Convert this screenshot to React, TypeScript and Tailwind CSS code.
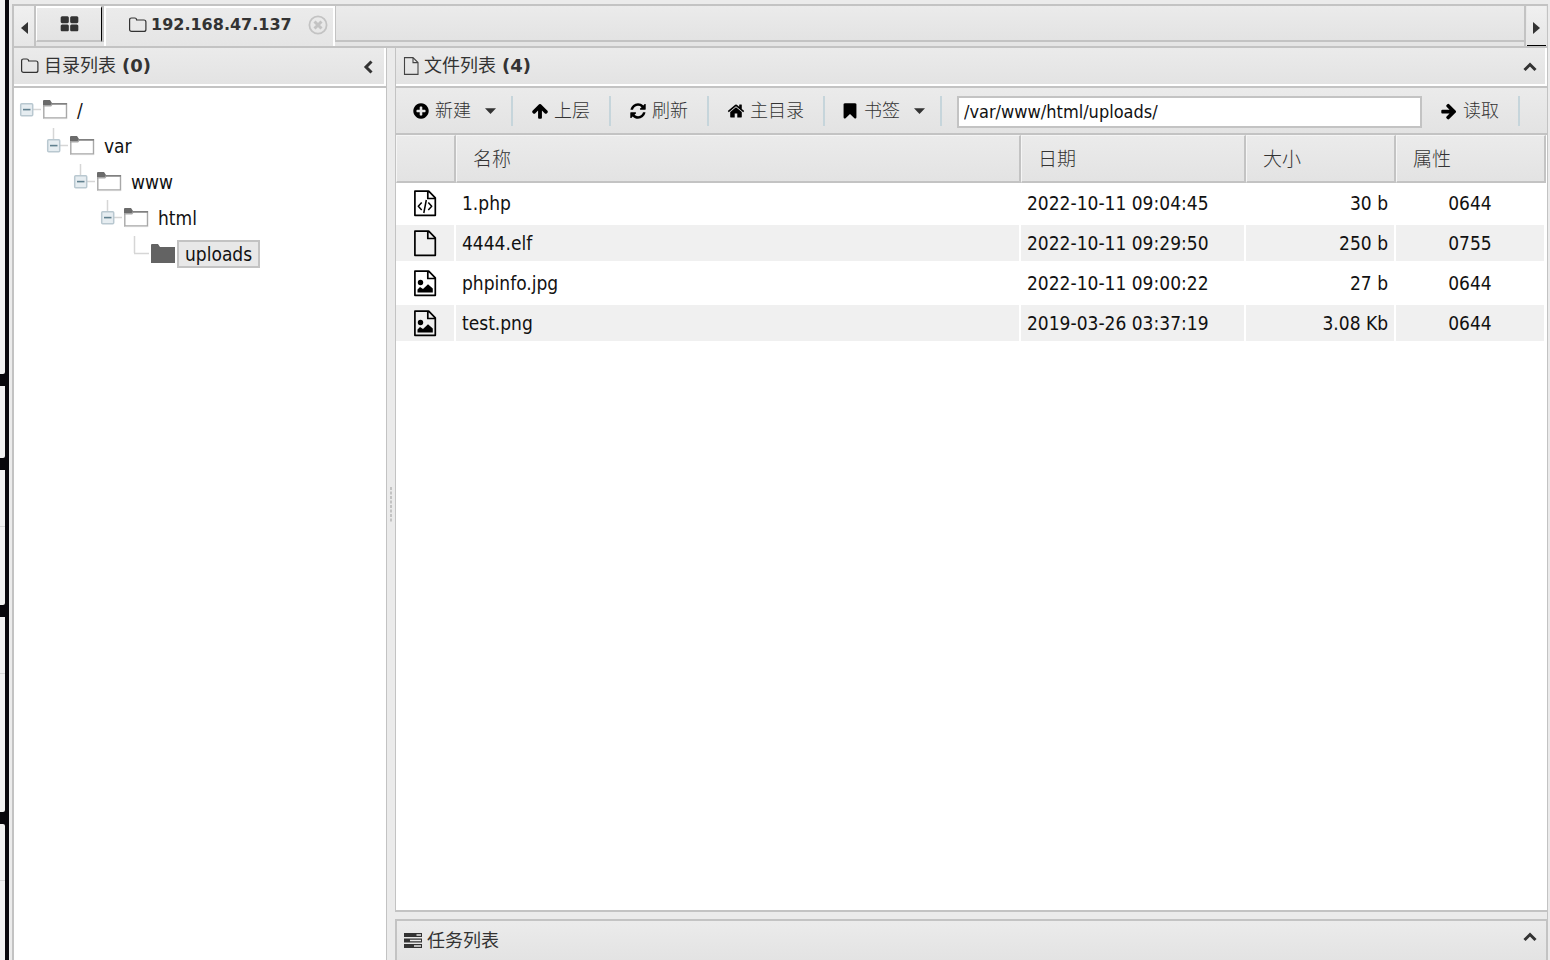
import React from "react";

const glyphs = {
  grid: "M832 1024v384q0 52-38 90t-90 38h-512q-52 0-90-38t-38-90v-384q0-52 38-90t90-38h512q52 0 90 38t38 90zm0-768v384q0 52-38 90t-90 38h-512q-52 0-90-38t-38-90v-384q0-52 38-90t90-38h512q52 0 90 38t38 90zm896 768v384q0 52-38 90t-90 38h-512q-52 0-90-38t-38-90v-384q0-52 38-90t90-38h512q52 0 90 38t38 90zm0-768v384q0 52-38 90t-90 38h-512q-52 0-90-38t-38-90v-384q0-52 38-90t90-38h512q52 0 90 38t38 90z",
  plus: "M1344 960v-128q0-26-19-45t-45-19h-256v-256q0-26-19-45t-45-19h-128q-26 0-45 19t-19 45v256h-256q-26 0-45 19t-19 45v128q0 26 19 45t45 19h256v256q0 26 19 45t45 19h128q26 0 45-19t19-45v-256h256q26 0 45-19t19-45zm320-64q0 209-103 385.5t-279.5 279.5-385.5 103-385.5-103-279.5-279.5-103-385.5 103-385.5 279.5-279.5 385.5-103 385.5 103 279.5 279.5 103 385.5z",
  up: "M1675 971q0 51-37 90l-75 75q-38 38-91 38-54 0-90-38l-294-293v704q0 52-37.5 84.5t-90.5 32.5h-128q-53 0-90.5-32.5t-37.5-84.5v-704l-294 293q-36 38-90 38t-90-38l-75-75q-38-38-38-90 0-53 38-91l651-651q35-37 90-37 54 0 91 37l651 651q37 39 37 91z",
  right: "M1600 960q0 54-37 91l-651 651q-39 37-91 37-51 0-90-37l-75-75q-38-38-38-91t38-91l293-293h-704q-52 0-84.5-37.5t-32.5-90.5v-128q0-53 32.5-90.5t84.5-37.5h704l-293-294q-38-36-38-90t38-90l75-75q38-38 90-38 53 0 91 38l651 651q37 35 37 90z",
  refresh: "M1639 1056q0 5-1 7-64 268-268 434.5t-478 166.5q-146 0-282.5-55t-243.5-157l-129 129q-19 19-45 19t-45-19-19-45v-448q0-26 19-45t45-19h448q26 0 45 19t19 45-19 45l-137 137q71 66 161 102t187 36q134 0 250-65t186-179q11-17 53-117 8-23 30-23h192q13 0 22.5 9.5t9.5 22.5zm25-800v448q0 26-19 45t-45 19h-448q-26 0-45-19t-19-45 19-45l138-138q-148-137-349-137-134 0-250 65t-186 179q-11 17-53 117-8 23-30 23h-199q-13 0-22.5-9.5t-9.5-22.5v-7q65-268 270-434.5t480-166.5q146 0 284 55.5t245 156.5l130-129q19-19 45-19t45 19 19 45z",
  home: "M1472 992v480q0 26-19 45t-45 19h-384v-384h-256v384h-384q-26 0-45-19t-19-45v-480q0-1 .5-3t.5-3l575-474 575 474q1 2 1 6zm223-69l-62 74q-8 9-21 11h-3q-13 0-21-7l-692-577-692 577q-12 8-24 7-13-2-21-11l-62-74q-8-10-7-23.5t11-21.5l719-599q32-26 76-26t76 26l244 204v-195q0-14 9-23t23-9h192q14 0 23 9t9 23v408l219 182q10 8 11 21.5t-7 23.5z",
  bookmark: "M1420 128q23 0 44 9 33 13 52.5 41t19.5 62v1289q0 34-19.5 62t-52.5 41q-19 8-44 8-48 0-83-32l-441-424-441 424q-36 33-83 33-23 0-44-9-33-13-52.5-41t-19.5-62v-1289q0-34 19.5-62t52.5-41q21-9 44-9h1048z",
};

function Glyph({ name, className = "size-[18px]" }: { name: keyof typeof glyphs; className?: string }) {
  return (
    <svg viewBox="0 0 1792 1792" className={`shrink-0 fill-current ${className}`} aria-hidden="true">
      <path d={glyphs[name]} />
    </svg>
  );
}

function FolderOutline() {
  return (
    <svg width="18" height="16" viewBox="0 0 18 16" fill="none" stroke="#333" strokeWidth="1.2" className="shrink-0" aria-hidden="true">
      <path d="M.6 3q0-2 2-2h3q2 0 2 2h7.300q2 0 2 2v7.400q0 2-2 2H2.600q-2 0-2-2z" />
    </svg>
  );
}

function FileOutline() {
  return (
    <svg width="16" height="18" viewBox="0 0 16 18" fill="none" stroke="#444" strokeWidth="1.1" className="shrink-0" aria-hidden="true">
      <path d="M1.500.6H10l5 5v11.800H1.500zM10 .6v5h5" />
    </svg>
  );
}

function Tasks() {
  return (
    <svg width="18" height="16" viewBox="0 0 18 16" className="shrink-0" aria-hidden="true">
      <path fill="#333" d="M0 0h18v4H0zM0 5.500h18v4H0zM0 11h18v4H0z" />
      <path fill="#e8e8e8" d="M12.500 1.200h4.500v1.600h-4.500zM6 6.700h11v1.600H6zM10 12.200h7v1.600h-7z" />
    </svg>
  );
}

function Chevron({ left = false }: { left?: boolean }) {
  return (
    <svg width="14" height="14" viewBox="0 0 14 14" fill="none" stroke="#333" strokeWidth="3" aria-hidden="true">
      <path d={left ? "M9.500 1.500 4 7l5.500 5.500" : "M1.500 10 7 4.500l5.500 5.500"} />
    </svg>
  );
}

function Caret() {
  return (
    <svg width="11" height="6" viewBox="0 0 11 6" className="shrink-0 fill-[#333]" aria-hidden="true">
      <path d="M0 .3h11L5.500 6z" />
    </svg>
  );
}

function TreeFolder({ filled = false }: { filled?: boolean }) {
  return (
    <svg width="25" height="20" viewBox="0 0 25 20" className="shrink-0" aria-hidden="true">
      {filled ? (
        <path fill="#636363" d="M0 1q0-1 1-1h6l2 3h15v16H0z" />
      ) : (
        <>
          <path fill="#6b6b6b" d="M0 7V1q0-1 1-1h6l2 3v4z" />
          <path d="M.8 5.800h7l1.500-2h14.200v14.200H.8z" fill="#fff" stroke="#a8a8a8" strokeWidth="1.400" />
          <path d="M8.500 3.800h15.500" stroke="#808080" strokeWidth="1.600" />
          <path d="M1 18.600h23" stroke="#d0d0d0" />
        </>
      )}
    </svg>
  );
}

function Branch({ root = false, leaf = false }: { root?: boolean; leaf?: boolean }) {
  return (
    <svg width="27" height="36" viewBox="0 0 27 36" fill="none" className="shrink-0" aria-hidden="true">
      {!root && <path d="M10.500 0v17" stroke="#d6d6d6" strokeWidth="1.500" />}
      <path d={leaf ? "M10 17.500h15" : "M17 17.500h8"} stroke="#d6d6d6" strokeWidth="1.500" />
      {!leaf && (
        <>
          <rect x="4.700" y="11.700" width="12" height="12" rx="1" fill="#e6edf1" stroke="#b9c8d0" strokeWidth="1.500" />
          <path d="M7 17.600h7.500" stroke="#60808f" strokeWidth="1.600" />
        </>
      )}
    </svg>
  );
}

function TreeNode({ path, depth = 0 }: { path: string[]; depth?: number }) {
  const [name, ...rest] = path;
  const leaf = rest.length === 0;
  return (
    <li>
      <div className="flex h-9 items-center">
        <Branch root={depth === 0} leaf={leaf} />
        <TreeFolder filled={leaf} />
        <button
          type="button"
          className={
            leaf
              ? "ml-px h-7 border-2 border-[#c3c3c3] bg-[#e8e8e8] px-1.5 leading-6"
              : "ml-px h-7 border-2 border-transparent px-1.5 leading-6"
          }
        >
          {name}
        </button>
      </div>
      {!leaf && (
        <ul className="pl-[27px]">
          <TreeNode path={rest} depth={depth + 1} />
        </ul>
      )}
    </li>
  );
}

type Kind = "code" | "file" | "image";

function FileIcon({ kind }: { kind: Kind }) {
  return (
    <svg width="24" height="28" viewBox="0 0 24 28" fill="none" stroke="#000" strokeWidth="1.700" strokeLinejoin="round" className="mx-auto" aria-hidden="true">
      <path d="M1.900 2.200h13.800l6.600 6.600v17.500H1.900zM14.800 2.500V9.500h7.200" />
      {kind === "code" && <path strokeWidth="1.500" d="M8.700 13.500 5.300 17.300l3.400 3.700M15.300 13.500l3.400 3.800-3.400 3.700M13.300 11l-2.500 13" />}
      {kind === "image" && (
        <g fill="#000" stroke="none">
          <circle cx="7.500" cy="13.500" r="2.700" />
          <path d="M4.500 23.500v-3l2.500-2.500 3 2 5-4.800 4.800 4.300v4z" />
        </g>
      )}
    </svg>
  );
}

const files: { name: string; kind: Kind; date: string; size: string; mode: string }[] = [
  { name: "1.php", kind: "code", date: "2022-10-11 09:04:45", size: "30 b", mode: "0644" },
  { name: "4444.elf", kind: "file", date: "2022-10-11 09:29:50", size: "250 b", mode: "0755" },
  { name: "phpinfo.jpg", kind: "image", date: "2022-10-11 09:00:22", size: "27 b", mode: "0644" },
  { name: "test.png", kind: "image", date: "2019-03-26 03:37:19", size: "3.08 Kb", mode: "0644" },
];

function ToolButton({ icon, label, menu = false }: { icon: keyof typeof glyphs; label: string; menu?: boolean }) {
  return (
    <>
      <button type="button" className={menu ? "flex shrink-0 items-center pr-[15px] pl-4" : "flex shrink-0 items-center pr-[19px] pl-[18px]"}>
        <Glyph name={icon} className="size-[18px] text-black" />
        <span className="ml-[5px] text-lg font-light text-[#333]">{label}</span>
        {menu && <span className="ml-3.5"><Caret /></span>}
      </button>
      <span className="h-[30px] w-0.5 shrink-0 bg-[#c6d5db]" />
    </>
  );
}

function PanelHeader({ icon, title, count, left = false }: { icon: React.ReactNode; title: string; count?: string; left?: boolean }) {
  return (
    <header className="flex h-10 shrink-0 items-center border-b-2 border-[#c3c3c3] bg-white pr-0.5 pb-0.5">
      <div className="flex h-full grow items-center justify-between bg-linear-to-b from-[#ebebeb] to-[#e3e3e3] pr-2 pl-[7px]">
        <h2 className="flex items-center gap-[5px] text-lg text-[#333]">
          {icon}
          <span className="font-normal">
            {title}
            {count && <b className="ml-1.5 font-[DejaVu_Sans,sans-serif]">{count}</b>}
          </span>
        </h2>
        <button type="button" aria-label={left ? "折叠目录列表" : "折叠文件列表"} className="pt-0.5">
          <Chevron left={left} />
        </button>
      </div>
    </header>
  );
}

const stripBlocks = [
  "h-[374px]",
  "h-[72px]",
  "h-[135px]",
  "h-[195px]",
];

export default function App() {
  return (
    <div className="flex h-screen overflow-hidden bg-[#ebebeb] pr-0.5 font-['DejaVu_Sans_Condensed','Noto_Sans_CJK_SC',sans-serif] text-[19px] text-[#111]">
      <div className="mr-[3px] flex w-[9px] shrink-0 flex-col gap-3 bg-[#08070b] pr-1">
        {stripBlocks.map((height, i) => (
          <div key={height} className={`shrink-0 rounded-br-xs bg-[#f1f1f1] ${height}`}>
            {i > 1 && <div className="mt-14 h-px bg-[#d8d8d8]" />}
          </div>
        ))}
        <div className="grow rounded-tr-xs bg-[#f1f1f1]">
          <div className="mt-14 h-px bg-[#d8d8d8]" />
        </div>
      </div>

      <div className="mt-1 flex min-w-0 grow flex-col border-t-2 border-r border-l-2 border-[#c3c3c3]">
        <nav className="flex h-[42px] shrink-0 border-b-2 border-[#c3c3c3] bg-[#e5e5e5]">
          <button type="button" aria-label="向左滚动" className="flex w-[22px] shrink-0 items-center justify-center border-r-2 border-[#c3c3c3] bg-linear-to-b from-[#f0f0f0] to-[#e6e6e6] pt-1">
            <svg width="7" height="12" viewBox="0 0 7 12" className="fill-[#333]"><path d="M7 0v12L0 6z" /></svg>
          </button>
          <button type="button" aria-label="主页" className="flex h-9 w-[66px] shrink-0 items-center justify-center border-t-2 border-r border-b-2 border-l border-t-white border-r-black border-b-[#c3c3c3] border-l-white bg-linear-to-b from-[#ebebeb] to-[#e3e3e3] text-[#333]">
            <Glyph name="grid" className="size-[19px]" />
          </button>
          <span className="h-9 w-0.5 shrink-0 bg-[#c3c3c3]" />
          <div className="flex h-full w-[231px] shrink-0 items-center border-x-2 border-t-2 border-white bg-linear-to-b from-[#ebebeb] to-[#e5e5e5] pb-1 pl-[23px]">
            <button type="button" className="flex items-center gap-1 font-[DejaVu_Sans,sans-serif] text-base font-bold text-[#333]">
              <FolderOutline />
              192.168.47.137
            </button>
            <button type="button" aria-label="关闭" className="ml-4">
              <svg width="20" height="20" viewBox="0 0 20 20" fill="none" stroke="#c3c3c3">
                <circle cx="10" cy="10" r="8.600" strokeWidth="1.800" />
                <path d="m6.500 6.500 7 7m0-7-7 7" strokeWidth="3" />
              </svg>
            </button>
          </div>
          <div className="h-9 grow border-b-2 border-l border-[#c3c3c3] bg-linear-to-b from-[#ebebeb] to-[#e3e3e3]" />
          <div className="flex w-[23px] shrink-0 border-l-2 border-[#c3c3c3] bg-[#e8e8e8] px-px">
            <button type="button" aria-label="向右滚动" className="flex grow items-center justify-center border-b border-black bg-linear-to-b from-[#f0f0f0] to-[#e6e6e6] pt-1">
              <svg width="7" height="12" viewBox="0 0 7 12" className="fill-[#333]"><path d="M0 0v12l7-6z" /></svg>
            </button>
          </div>
        </nav>

        <div className="flex min-h-0 grow">
          <aside className="flex w-[373px] shrink-0 flex-col border-r border-[#c3c3c3] bg-white">
            <PanelHeader icon={<FolderOutline />} title="目录列表" count="(0)" left />
            <ul className="pt-1 pl-0.5">
              <TreeNode path={["/", "var", "www", "html", "uploads"]} />
            </ul>
          </aside>

          <div className="flex w-2 shrink-0 items-center justify-center">
            <svg width="3" height="35" viewBox="0 0 3 35" aria-hidden="true">
              <path d="M1 0v35" stroke="#c3c3c3" strokeWidth="2" strokeDasharray="3 1.500" />
            </svg>
          </div>

          <main className="flex min-w-0 grow flex-col">
            <section className="flex min-h-0 grow flex-col border-b-2 border-l border-[#c3c3c3] bg-white">
              <PanelHeader icon={<FileOutline />} title="文件列表" count="(4)" />
              <div className="flex h-[47px] shrink-0 items-center border-b-2 border-[#c3c3c3] bg-linear-to-b from-[#ebebeb] to-[#e3e3e3]">
                <ToolButton icon="plus" label="新建" menu />
                <ToolButton icon="up" label="上层" />
                <ToolButton icon="refresh" label="刷新" />
                <ToolButton icon="home" label="主目录" />
                <ToolButton icon="bookmark" label="书签" menu />
                <input
                  aria-label="路径"
                  defaultValue="/var/www/html/uploads/"
                  className="mt-0.5 ml-[15px] h-8 w-[465px] min-w-0 border-2 border-[#c3c3c3] bg-white px-[5px] text-lg outline-none"
                />
                <ToolButton icon="right" label="读取" />
              </div>
              <div className="pr-px">
                <table className="w-full table-fixed border-separate border-spacing-0">
                  <colgroup>
                    <col className="w-[60px]" />
                    <col />
                    <col className="w-[225px]" />
                    <col className="w-[150px]" />
                    <col className="w-[150px]" />
                  </colgroup>
                  <thead>
                    <tr>
                      {["", "名称", "日期", "大小", "属性"].map((title) => (
                        <th
                          key={title}
                          className="h-12 border-t border-r-2 border-b-2 border-l border-t-[#f5f5f5] border-r-[#c3c3c3] border-b-[#c3c3c3] border-l-[#f5f5f5] bg-linear-to-b from-[#ebebeb] to-[#e3e3e3] pt-0.5 pb-0 pl-4 text-left font-light text-[#333]"
                        >
                          {title}
                        </th>
                      ))}
                    </tr>
                  </thead>
                  <tbody className="[&>tr:nth-child(even)]:bg-[#f0f0f0] [&_td]:h-10 [&_td]:border-y-2 [&_td]:border-r-2 [&_td]:border-white [&_td]:px-1.5 [&_td]:py-0">
                    {files.map((f) => (
                      <tr key={f.name}>
                        <td><FileIcon kind={f.kind} /></td>
                        <td>{f.name}</td>
                        <td>{f.date}</td>
                        <td className="text-right">{f.size}</td>
                        <td className="text-center">{f.mode}</td>
                      </tr>
                    ))}
                  </tbody>
                </table>
              </div>
            </section>

            <section className="mt-[7px] flex h-[41px] shrink-0 items-center justify-between border-t-2 border-r border-l-2 border-[#c3c3c3] bg-linear-to-b from-[#ebebeb] to-[#e3e3e3] pr-[9px] pl-[7px]">
              <h2 className="flex items-center gap-[5px] text-lg font-normal text-[#333]">
                <Tasks />
                任务列表
              </h2>
              <button type="button" aria-label="展开任务列表" className="pb-2">
                <Chevron />
              </button>
            </section>
          </main>
        </div>
      </div>
    </div>
  );
}
